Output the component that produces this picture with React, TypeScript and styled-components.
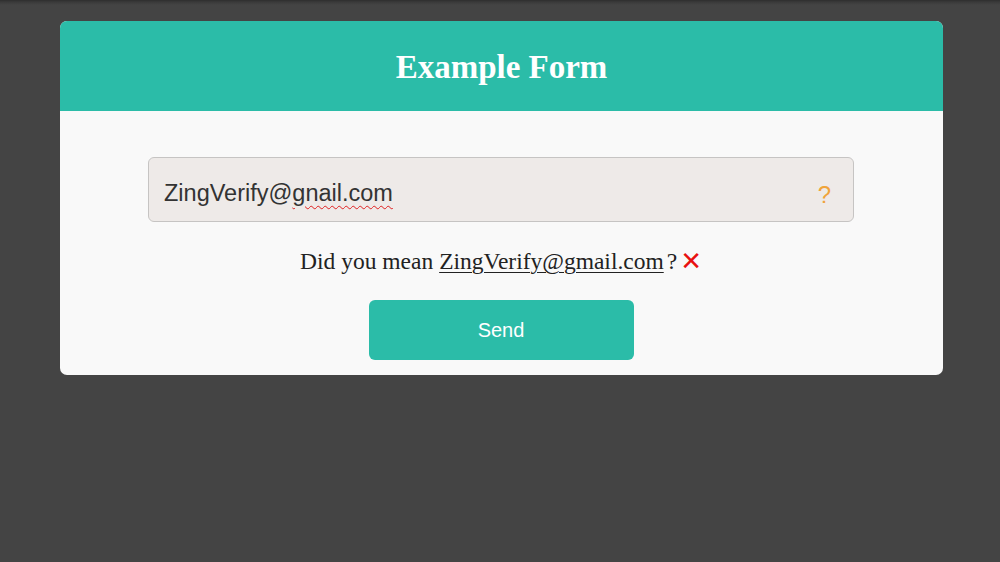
import React from "react";
import styled, { createGlobalStyle } from "styled-components";

const Global = createGlobalStyle`
  html, body { margin: 0; padding: 0; }
  body {
    background: linear-gradient(to bottom, #2e2e2e 0px, #3a3a3a 2px, #444444 5px, #444444 100%);
    background-color: #444444;
    min-height: 562px;
    font-family: "Liberation Serif", "Times New Roman", serif;
  }
`;

const Page = styled.div`
  padding: 21px 57px 0 60px;
`;

const Card = styled.div`
  background: #f9f9f9;
  border-radius: 7px;
  overflow: hidden;
`;

const Header = styled.div`
  height: 90px;
  background: #2bbca8;
  display: flex;
  align-items: center;
  justify-content: center;
`;

const Title = styled.h1`
  margin: 0;
  color: #ffffff;
  font-family: "Liberation Serif", "Times New Roman", serif;
  font-weight: bold;
  font-size: 33px;
  padding-top: 3px;
`;

const Body = styled.div`
  padding: 46px 89px 15px 88px;
  display: flex;
  flex-direction: column;
  align-items: center;
`;

const Field = styled.div`
  box-sizing: border-box;
  width: 100%;
  height: 65px;
  background: #eeeae8;
  border: 1px solid #c6c4c3;
  border-radius: 6px;
  display: flex;
  align-items: center;
  justify-content: space-between;
  padding: 0 22px 0 15px;
  font-family: "Liberation Sans", Arial, sans-serif;
  font-size: 23.5px;
  color: #333333;
`;

const Value = styled.span`
  padding-top: 8px;
`;

const Misspelt = styled.span`
  text-decoration: underline wavy #e02020;
  text-decoration-thickness: 1px;
  text-underline-offset: 4px;
`;

const Hint = styled.span`
  color: #f0a43a;
  font-size: 24px;
  padding-top: 10px;
`;

const Suggestion = styled.div`
  margin-top: 24px;
  font-family: "Liberation Serif", "Times New Roman", serif;
  font-size: 23.5px;
  color: #222222;
  display: flex;
  align-items: center;
  height: 30px;
`;

const Link = styled.a`
  color: #222222;
  text-decoration: underline;
  text-decoration-thickness: 1px;
  text-underline-offset: 3px;
  margin-left: 6px;
  margin-right: 3px;
`;

const Close = styled.span`
  color: #e81010;
  font-family: "DejaVu Sans", sans-serif;
  font-size: 26px;
  font-weight: bold;
  margin-left: 3px;
`;

const Button = styled.button`
  margin-top: 24px;
  width: 265px;
  height: 60px;
  border: none;
  border-radius: 6px;
  background: #2bbca8;
  color: #ffffff;
  font-family: "Liberation Sans", Arial, sans-serif;
  font-size: 20px;
  cursor: pointer;
`;

export default function App() {
  return (
    <>
      <Global />
      <Page>
        <Card>
          <Header>
            <Title>Example Form</Title>
          </Header>
          <Body>
            <Field>
              <Value>
                ZingVerify@<Misspelt>gnail.com</Misspelt>
              </Value>
              <Hint>?</Hint>
            </Field>
            <Suggestion>
              Did you mean<Link>ZingVerify@gmail.com</Link>?<Close>✕</Close>
            </Suggestion>
            <Button>Send</Button>
          </Body>
        </Card>
      </Page>
    </>
  );
}
